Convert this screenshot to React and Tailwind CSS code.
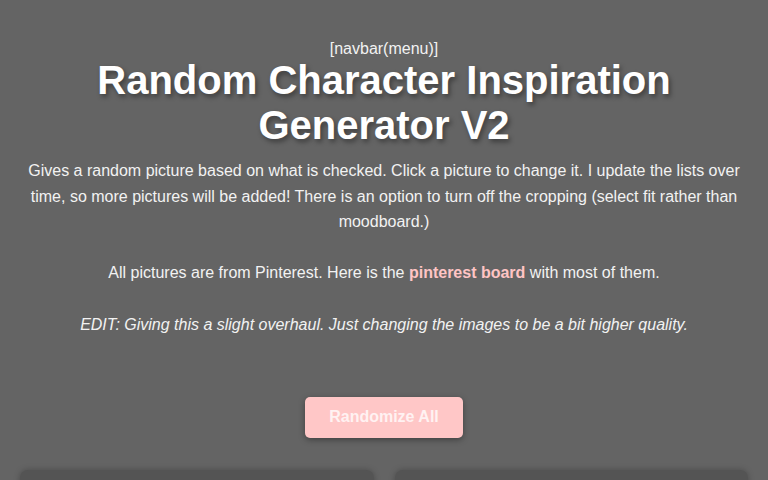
import React from "react";

export default function App() {
  return (
    <div className="min-h-screen bg-[#646464] text-[#f2f2f2] font-['Liberation_Sans',Arial,sans-serif] px-5 pt-[40px]">
      <div className="text-center text-base leading-[18px]">[navbar(menu)]</div>

      <h1 className="text-center text-[40px] leading-[45px] font-bold text-white [text-shadow:2px_3px_5px_rgba(0,0,0,0.4)] mx-auto max-w-[600px]">
        Random Character Inspiration Generator V2
      </h1>

      <div className="mt-[10px] text-center text-base leading-[25.6px]">
        <p>
          Gives a random picture based on what is checked. Click a picture to change it. I update the lists over time, so more
          pictures will be added! There is an option to turn off the cropping (select fit rather than moodboard.)
        </p>
        <p className="mt-[25px]">
          All pictures are from Pinterest. Here is the{" "}
          <a href="#" className="font-bold text-[#ffc4c4]">
            pinterest board
          </a>{" "}
          with most of them.
        </p>
        <p className="mt-[27px] italic">
          EDIT: Giving this a slight overhaul. Just changing the images to be a bit higher quality.
        </p>
      </div>

      <div className="flex justify-center mt-[59px]">
        <button className="h-[41px] w-[158px] rounded-[5px] bg-[#ffc7c7] text-[#fff2f2] font-bold text-base shadow-[0_2px_6px_rgba(0,0,0,0.35)]">
          Randomize All
        </button>
      </div>

      <div className="grid grid-cols-2 gap-[21px] mt-[32px]">
        <div className="h-[200px] rounded-lg bg-[#545454] shadow-[0_0_6px_rgba(0,0,0,0.25)]" />
        <div className="h-[200px] rounded-lg bg-[#545454] shadow-[0_0_6px_rgba(0,0,0,0.25)]" />
      </div>
    </div>
  );
}
